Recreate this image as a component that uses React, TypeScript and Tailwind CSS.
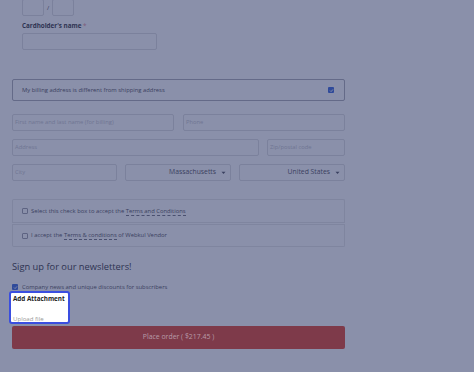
import React from "react";

const font = { fontFamily: '"Open Sans", "Liberation Sans", sans-serif' };

function Input({ ph, className }: { ph: string; className: string }) {
  return (
    <div className={`h-[17px] border border-[#7b819c] rounded-[2px] flex items-center px-[2px] text-[5.8px] text-[#6f7592] ${className}`}>
      {ph}
    </div>
  );
}

function Select({ label, className }: { label: string; className: string }) {
  return (
    <div className={`h-[17px] border border-[#7b819c] rounded-[2px] flex items-center justify-end pr-[4px] gap-[5px] text-[6.8px] text-[#3a4060] ${className}`}>
      <span>{label}</span>
      <svg width="5" height="4" viewBox="0 0 10 8">
        <path d="M1 1.5 L5 6 L9 1.5 Z" fill="#3a4060" />
      </svg>
    </div>
  );
}

function Check({ checked }: { checked?: boolean }) {
  if (checked)
    return (
      <div className="w-[6px] h-[6px] rounded-[1px] bg-[#2f4a9a] flex items-center justify-center shrink-0">
        <svg width="5" height="5" viewBox="0 0 10 10">
          <path d="M2 5 L4.2 7.2 L8 2.8" stroke="#8a90aa" strokeWidth="1.8" fill="none" />
        </svg>
      </div>
    );
  return <div className="w-[6px] h-[6px] rounded-[1px] border border-[#5d6382] shrink-0" />;
}

export default function App() {
  return (
    <div className="w-[474px] h-[372px] bg-[#8a90aa] overflow-hidden relative" style={font}>
      <div className="w-[333px] ml-[12px] flex flex-col">
        <div className="pl-[10px] flex items-center gap-[3px] h-[16px]">
          <div className="w-[22px] h-[17px] -mt-[1px] border border-[#7b819c] rounded-[2px]" />
          <span className="text-[6px] text-[#3a4060]">/</span>
          <div className="w-[22px] h-[17px] -mt-[1px] border border-[#7b819c] rounded-[2px]" />
        </div>
        <div className="pl-[10px] mt-[6px] text-[6.3px] font-bold text-[#2e3352] leading-[8px]">
          Cardholder's name <span className="text-[#7d5a78] font-normal">*</span>
        </div>
        <div className="ml-[10px] mt-[3px] w-[135px] h-[17px] border border-[#7b819c] rounded-[2px]" />

        <div className="mt-[29px] h-[22px] border border-[#646a88] rounded-[2px] flex items-center justify-between pl-[9px] pr-[10px] text-[5.85px] text-[#3a4060]">
          <span>My billing address is different from shipping address</span>
          <Check checked />
        </div>

        <div className="mt-[13px] flex gap-[9px]">
          <Input ph="First name and last name (for billing)" className="w-[162px]" />
          <Input ph="Phone" className="flex-1" />
        </div>
        <div className="mt-[8px] flex gap-[8px]">
          <Input ph="Address" className="w-[247px]" />
          <Input ph="Zip/postal code" className="flex-1" />
        </div>
        <div className="mt-[8px] flex gap-[8px]">
          <Input ph="City" className="w-[105px]" />
          <Select label="Massachusetts" className="w-[106px]" />
          <Select label="United States" className="flex-1" />
        </div>

        <div className="mt-[18px] h-[23px] border border-[#7f859f] border-b-0 rounded-t-[2px] flex items-center gap-[3px] pl-[9px] text-[5.85px] text-[#3a4060]">
          <Check />
          <span>
            Select this check box to accept the{" "}
            <span className="border-b border-dashed border-[#4a5070]">Terms and Conditions</span>
          </span>
        </div>
        <div className="h-[3px] border-t border-b border-[#7f859f]" />
        <div className="h-[22px] border border-[#7f859f] border-t-0 rounded-b-[2px] flex items-center gap-[3px] pl-[9px] text-[5.85px] text-[#3a4060]">
          <Check />
          <span>
            I accept the{" "}
            <span className="border-b border-dashed border-[#4a5070]">Terms &amp; conditions</span> of Webkul Vendor
          </span>
        </div>

        <div className="mt-[14px] text-[9.3px] text-[#2e3352] leading-[12px]">Sign up for our newsletters!</div>
        <div className="mt-[10px] flex items-center gap-[4px] text-[5.9px] text-[#3a4060]">
          <Check checked />
          <span>Company news and unique discounts for subscribers</span>
        </div>
        <div className="-ml-[3px] -mt-[1px] w-[61px] h-[33px] bg-white border-2 border-[#3a4ee0] rounded-[3px] px-[2px] pt-[2px] flex flex-col relative z-10">
          <span className="text-[6.3px] font-bold text-[#222] leading-[8px]">Add Attachment</span>
          <span className="mt-[12px] text-[6.1px] text-[#999] leading-[8px]">Upload file</span>
        </div>
        <div className="mt-[2px] h-[23px] bg-[#7e3a4a] rounded-[2px] flex items-center justify-center text-[6.9px] text-[#b79aa8]">
          Place order ( $217.45 )
        </div>
      </div>
    </div>
  );
}
